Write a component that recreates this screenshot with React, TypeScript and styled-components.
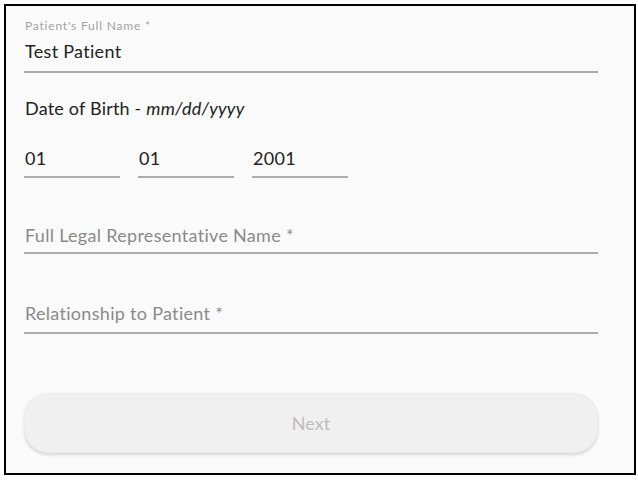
import React from 'react'
import styled, { createGlobalStyle } from 'styled-components'

const GlobalStyle = createGlobalStyle`
    html, body {
        margin: 0;
        padding: 0;
        background: #ffffff;
    }
    * {
        box-sizing: border-box;
    }
`

const Frame = styled.div`
    margin: 4px;
    width: 632px;
    height: 471px;
    border: 2px solid #000;
    background: #fafafa;
    padding: 13px 36px 0 19px;
    font-family: Lato, "Open Sans", sans-serif;
    display: flex;
    flex-direction: column;
`

const Field = styled.label<{ $gap?: number; $width?: string; $pad?: number }>`
    display: flex;
    flex-direction: column;
    margin-top: ${(p) => p.$gap ?? 0}px;
    margin-left: -1px;
    width: ${(p) => p.$width ?? 'calc(100% + 1px)'};
    border-bottom: 2px solid #acacac;
    padding-bottom: ${(p) => p.$pad ?? 4}px;
    padding-left: 1px;
`

const SmallLabel = styled.span`
    font-size: 12px;
    line-height: 14px;
    letter-spacing: 0.8px;
    color: #a3a3a3;
    margin-bottom: 6px;
`

const TextInput = styled.input`
    border: none;
    outline: none;
    background: transparent;
    padding: 0;
    margin: 0;
    width: 100%;
    font-family: inherit;
    font-size: 18px;
    letter-spacing: 0.3px;
    line-height: 24px;
    height: 24px;
    color: #222;
    &::placeholder {
        color: #8a8a8a;
        opacity: 1;
    }
`

const Heading = styled.div`
    margin-top: 23px;
    font-size: 18px;
    letter-spacing: 0.2px;
    line-height: 24px;
    color: #222;
    em {
        font-style: italic;
    }
`

const DateRow = styled.div`
    display: flex;
    gap: 19px;
    margin-top: 26px;
`

const NextButton = styled.button`
    margin-top: 59px;
    margin-left: -1px;
    width: calc(100% + 1px);
    height: 60px;
    border: 1px solid #ebebeb;
    border-radius: 24px;
    background: #f0f0f0;
    box-shadow: 0 2px 3px rgba(0, 0, 0, 0.14);
    font-family: inherit;
    font-size: 18px;
    color: #bdbdbd;
    cursor: default;
`

export default function App() {
    return (
        <>
            <GlobalStyle />
            <Frame>
                <Field $pad={8}>
                    <SmallLabel>Patient's Full Name *</SmallLabel>
                    <TextInput defaultValue="Test Patient" />
                </Field>
                <Heading>
                    Date of Birth - <em>mm/dd/yyyy</em>
                </Heading>
                <DateRow>
                    <Field $width="96px" $pad={6}>
                        <TextInput defaultValue="01" />
                    </Field>
                    <Field $width="96px" $pad={6}>
                        <TextInput defaultValue="01" />
                    </Field>
                    <Field $width="96px" $pad={6}>
                        <TextInput defaultValue="2001" />
                    </Field>
                </DateRow>
                <Field $gap={45} $pad={5}>
                    <TextInput placeholder="Full Legal Representative Name *" />
                </Field>
                <Field $gap={47} $pad={7}>
                    <TextInput placeholder="Relationship to Patient *" />
                </Field>
                <NextButton disabled>Next</NextButton>
            </Frame>
        </>
    )
}
